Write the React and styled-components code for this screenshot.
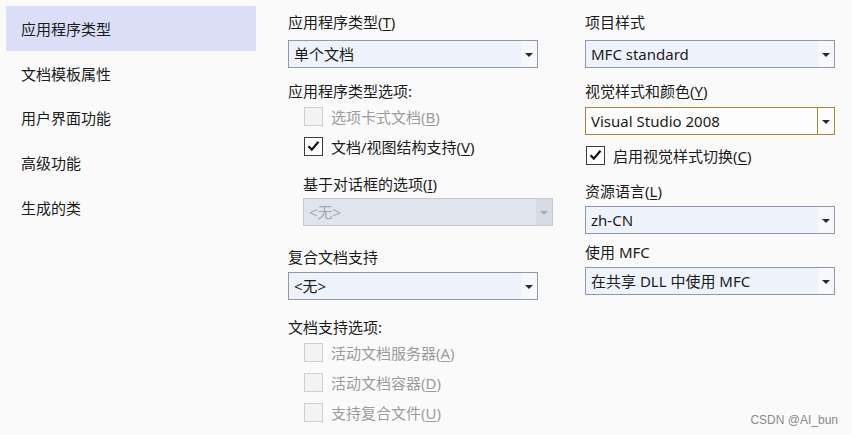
import React from "react";
import styled, { createGlobalStyle, css } from "styled-components";

const Global = createGlobalStyle`
  html, body { margin: 0; padding: 0; background: #fafafa; }
  body {
    font-family: "Noto Sans", "Noto Sans CJK SC", sans-serif;
    color: #1b1b1b;
    -webkit-font-smoothing: antialiased;
  }
`;

const Page = styled.div`
  position: relative;
  width: 852px;
  height: 435px;
  display: flex;
  overflow: hidden;
  background: #fafafa;
`;

const Sidebar = styled.nav`
  width: 250px;
  padding: 6px 0 0 6px;
  display: flex;
  flex-direction: column;
`;

const NavItem = styled.div`
  height: 44.75px;
  display: flex;
  align-items: center;
  padding-left: 15px;
  font-size: 15px;
  background: ${(p) => (p.$active ? "#dadff7" : "transparent")};
`;

const Columns = styled.div`
  display: flex;
  gap: 32px;
  margin-left: 32px;
  padding-top: 12px;
`;

const Column = styled.div`
  width: ${(p) => p.$w}px;
  display: flex;
  flex-direction: column;
`;

const Label = styled.div`
  height: 20px;
  line-height: 20px;
  font-size: 15px;
  white-space: nowrap;
  margin-top: ${(p) => p.$mt || 0}px;
  padding-left: ${(p) => p.$indent || 0}px;
  u { text-decoration-thickness: 1px; text-underline-offset: 2px; }
`;

const SelectBox = styled.div`
  box-sizing: border-box;
  height: 28px;
  width: ${(p) => p.$w || 250}px;
  margin-top: ${(p) => p.$mt || 0}px;
  margin-left: ${(p) => p.$ml || 0}px;
  display: flex;
  border: 1px solid #8e98ab;
  background: #eef2fb;
  ${(p) =>
    p.$focus &&
    css`
      border-color: #b08632;
      background: #fdfdfd;
    `}
  ${(p) =>
    p.$disabled &&
    css`
      border-color: #c3cad6;
      background: #dfe5ef;
      color: #a3a7ae;
    `}
`;

const SelectText = styled.div`
  flex: 1;
  padding-left: 5px;
  font-size: 15px;
  line-height: 26px;
  white-space: nowrap;
`;

const ArrowArea = styled.div`
  width: 16px;
  display: flex;
  align-items: center;
  justify-content: center;
  background: #f7f8fa;
  ${(p) =>
    p.$focus &&
    css`
      background: #fdfdfd;
      border-left: 1px solid #b08632;
    `}
  ${(p) =>
    p.$disabled &&
    css`
      background: #d6dbe4;
    `}
`;

const Arrow = styled.span`
  width: 0;
  height: 0;
  border-left: 4px solid transparent;
  border-right: 4px solid transparent;
  border-top: 4px solid ${(p) => (p.$disabled ? "#a8abb2" : "#1f2a3d")};
  margin-top: 1px;
`;

const CheckRow = styled.div`
  height: 20px;
  display: flex;
  align-items: center;
  gap: 8px;
  margin-top: ${(p) => p.$mt || 0}px;
  padding-left: ${(p) => p.$indent || 0}px;
  font-size: 15px;
  white-space: nowrap;
  color: ${(p) => (p.$disabled ? "#9c9c9c" : "#1b1b1b")};
  u { text-decoration-thickness: 1px; text-underline-offset: 2px; }
`;

const Box = styled.span`
  box-sizing: border-box;
  width: 19px;
  height: 19px;
  flex: none;
  display: flex;
  align-items: center;
  justify-content: center;
  border: 1px solid ${(p) => (p.$disabled ? "#cfcfcf" : "#3c3c3c")};
  background: ${(p) => (p.$disabled ? "#f3f3f3" : "#ffffff")};
`;

const Watermark = styled.div`
  position: absolute;
  right: 14px;
  bottom: 8px;
  font-family: "Liberation Sans", Arial, sans-serif;
  font-size: 12px;
  color: #8a8a8a;
`;

function Select({ value, w, mt, ml, focus, disabled }) {
  return (
    <SelectBox $w={w} $mt={mt} $ml={ml} $focus={focus} $disabled={disabled}>
      <SelectText>{value}</SelectText>
      <ArrowArea $focus={focus} $disabled={disabled}>
        <Arrow $disabled={disabled} />
      </ArrowArea>
    </SelectBox>
  );
}

function Check({ checked, disabled, children, mt, indent }) {
  return (
    <CheckRow $mt={mt} $indent={indent} $disabled={disabled}>
      <Box $disabled={disabled}>
        {checked && (
          <svg width="13" height="12" viewBox="0 0 13 12">
            <path d="M1.5 6.2 L4.8 9.6 L11.5 1.8" fill="none" stroke="#111" strokeWidth="2.2" />
          </svg>
        )}
      </Box>
      <span>{children}</span>
    </CheckRow>
  );
}

const navItems = ["应用程序类型", "文档模板属性", "用户界面功能", "高级功能", "生成的类"];

export default function App() {
  return (
    <Page>
      <Global />
      <Sidebar>
        {navItems.map((t, i) => (
          <NavItem key={t} $active={i === 0}>
            {t}
          </NavItem>
        ))}
      </Sidebar>
      <Columns>
        <Column $w={265}>
          <Label>
            应用程序类型(<u>T</u>)
          </Label>
          <Select value="单个文档" mt={8} />
          <Label $mt={13}>应用程序类型选项:</Label>
          <Check mt={5} indent={16} disabled>
            选项卡式文档(<u>B</u>)
          </Check>
          <Check mt={10} indent={16} checked>
            文档/视图结构支持(<u>V</u>)
          </Check>
          <Label $mt={18} $indent={15}>
            基于对话框的选项(<u>I</u>)
          </Label>
          <Select value="<无>" mt={4} ml={15} w={250} disabled />
          <Label $mt={21}>复合文档支持</Label>
          <Select value="<无>" mt={5} />
          <Label $mt={17}>文档支持选项:</Label>
          <Check mt={5} indent={16} disabled>
            活动文档服务器(<u>A</u>)
          </Check>
          <Check mt={10} indent={16} disabled>
            活动文档容器(<u>D</u>)
          </Check>
          <Check mt={10} indent={16} disabled>
            支持复合文件(<u>U</u>)
          </Check>
        </Column>
        <Column $w={250}>
          <Label>项目样式</Label>
          <Select value="MFC standard" mt={8} />
          <Label $mt={13}>
            视觉样式和颜色(<u>Y</u>)
          </Label>
          <Select value="Visual Studio 2008" mt={6} focus />
          <Check mt={10} indent={1} checked>
            启用视觉样式切换(<u>C</u>)
          </Check>
          <Label $mt={16}>
            资源语言(<u>L</u>)
          </Label>
          <Select value="zh-CN" mt={5} />
          <Label $mt={8}>使用 MFC</Label>
          <Select value="在共享 DLL 中使用 MFC" mt={5} />
        </Column>
      </Columns>
      <Watermark>CSDN @AI_bun</Watermark>
    </Page>
  );
}
